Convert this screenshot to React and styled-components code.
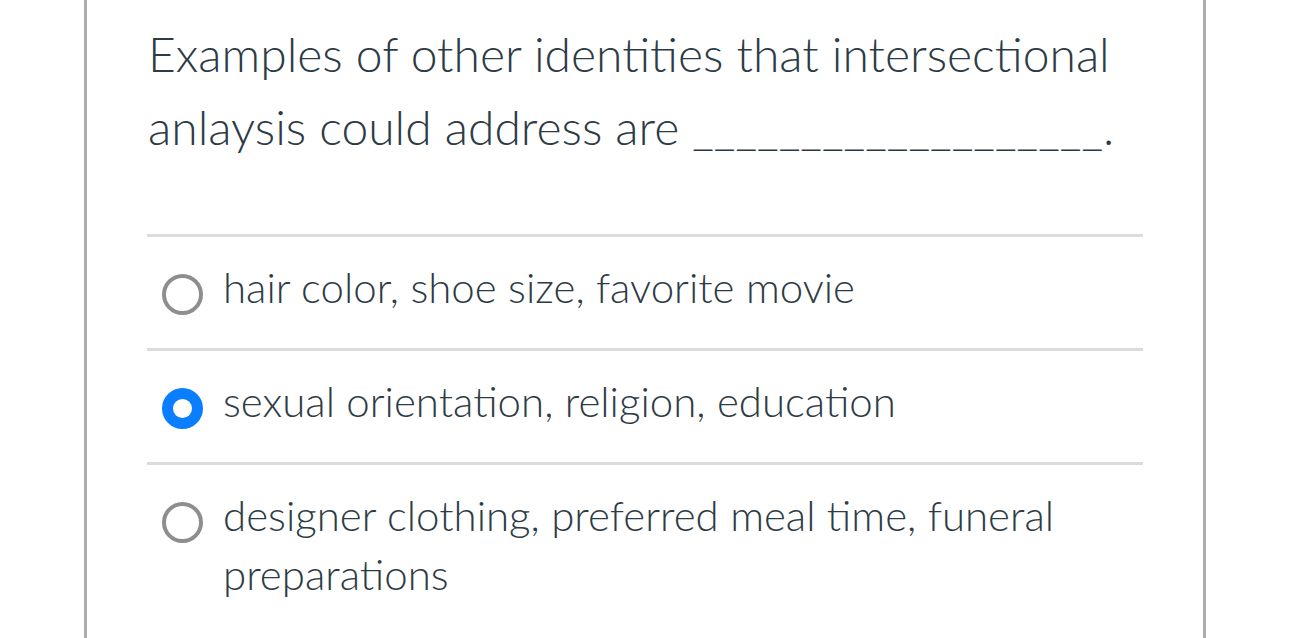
import styled, { createGlobalStyle } from "styled-components";

const GlobalStyle = createGlobalStyle`
  html, body {
    margin: 0;
    padding: 0;
    background: #ffffff;
  }
  body {
    font-family: Lato, "Noto Sans", sans-serif;
    color: #2d3b45;
  }
`;

const Page = styled.div`
  display: flex;
  justify-content: center;
  min-height: 100vh;
`;

const Card = styled.div`
  width: 1122px;
  box-sizing: border-box;
  min-height: 100vh;
  border-left: 3px solid #adadad;
  border-right: 3px solid #adadad;
  padding: 17px 60px 0 60px;
`;

const Question = styled.p`
  margin: 0 0 71px 1px;
  font-size: 48px;
  line-height: 73px;
  font-weight: 300;
  color: #2d3b45;
`;

const Answers = styled.div`
  display: flex;
  flex-direction: column;
`;

const Answer = styled.label`
  display: flex;
  align-items: flex-start;
  gap: 20px;
  padding: 21px 0 31px 15px;
  border-top: 3px solid #dcdcdc;
`;

const Radio = styled.span`
  flex: none;
  box-sizing: border-box;
  width: 41px;
  height: 41px;
  margin-top: 16px;
  border-radius: 50%;
  border: ${(p) => (p.checked ? "11.5px solid #0b7eff" : "4px solid #8e8e8e")};
  background: #ffffff;
`;

const AnswerText = styled.span`
  font-size: 42px;
  line-height: 59px;
  font-weight: 300;
  color: #2d3b45;
`;

const answers = [
  { text: "hair color, shoe size, favorite movie", checked: false },
  { text: "sexual orientation, religion, education", checked: true },
  { text: "designer clothing, preferred meal time, funeral preparations", checked: false },
];

function App() {
  return (
    <>
      <GlobalStyle />
      <Page>
        <Card>
          <Question>
            Examples of other identities that intersectional anlaysis could
            address are ___________________.
          </Question>
          <Answers>
            {answers.map((a) => (
              <Answer key={a.text}>
                <Radio checked={a.checked} />
                <AnswerText>{a.text}</AnswerText>
              </Answer>
            ))}
          </Answers>
        </Card>
      </Page>
    </>
  );
}

export default App;
